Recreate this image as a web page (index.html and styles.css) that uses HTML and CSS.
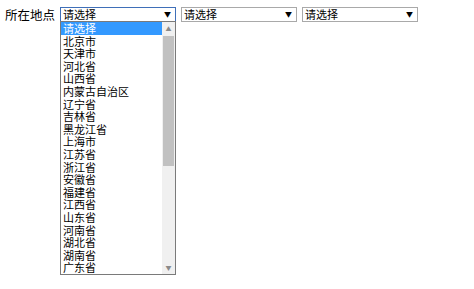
FILE: index.html
```html
<!DOCTYPE html>
<html lang="zh-CN">
<head>
    <meta charset="UTF-8">
    <title>所在地点</title>
    <link rel="stylesheet" href="styles.css">
</head>
<body>
    <div class="location">
        <span class="label">所在地点</span>
        <div class="select-wrap">
            <div class="select open">请选择<span class="arrow">&#9660;</span></div>
            <div class="dropdown">
                <div class="options">
                    <div class="option selected">请选择</div>
                    <div class="option">北京市</div>
                    <div class="option">天津市</div>
                    <div class="option">河北省</div>
                    <div class="option">山西省</div>
                    <div class="option">内蒙古自治区</div>
                    <div class="option">辽宁省</div>
                    <div class="option">吉林省</div>
                    <div class="option">黑龙江省</div>
                    <div class="option">上海市</div>
                    <div class="option">江苏省</div>
                    <div class="option">浙江省</div>
                    <div class="option">安徽省</div>
                    <div class="option">福建省</div>
                    <div class="option">江西省</div>
                    <div class="option">山东省</div>
                    <div class="option">河南省</div>
                    <div class="option">湖北省</div>
                    <div class="option">湖南省</div>
                    <div class="option">广东省</div>
                </div>
                <div class="scrollbar">
                    <span class="scroll-up">&#9650;</span>
                    <div class="track"><div class="thumb"></div></div>
                    <span class="scroll-down">&#9660;</span>
                </div>
            </div>
        </div>
        <div class="select">请选择<span class="arrow">&#9660;</span></div>
        <div class="select">请选择<span class="arrow">&#9660;</span></div>
    </div>
</body>
</html>
```

FILE: styles.css
```css
html, body {
    height: 100%;
}

body {
    margin: 0;
    padding: 7px 5px;
    box-sizing: border-box;
    background: #fff;
    color: #000;
    font-family: "Noto Sans CJK SC", "Liberation Sans", sans-serif;
}

.location {
    display: flex;
    align-items: flex-start;
    gap: 5px;
}

.label {
    font-size: 12.5px;
    line-height: 15px;
}

.select-wrap {
    position: relative;
}

.select {
    width: 110px;
    height: 13px;
    border: 1px solid #a9a9a9;
    padding: 0 2px;
    font-size: 11px;
    line-height: 13px;
    display: flex;
    justify-content: space-between;
    align-items: center;
    background: #fff;
}

.select.open {
    border-color: #3f6fb8;
}

.arrow {
    font-size: 7px;
    margin-right: 2px;
}

.dropdown {
    position: absolute;
    top: 14px;
    left: 0;
    width: 114px;
    height: 252px;
    border: 1px solid #7a7a7a;
    background: #fff;
    display: flex;
    overflow: hidden;
}

.options {
    flex: 1;
}

.option {
    height: 12.6px;
    line-height: 12.6px;
    font-size: 11px;
    padding-left: 2px;
    white-space: nowrap;
}

.option.selected {
    background: #3399ff;
    color: #fff;
}

.scrollbar {
    width: 13px;
    background: #f0f0f0;
    display: flex;
    flex-direction: column;
    align-items: center;
}

.scroll-up, .scroll-down {
    height: 13px;
    line-height: 13px;
    font-size: 6px;
    color: #8a8a8a;
}

.track {
    flex: 1;
    width: 100%;
}

.thumb {
    margin: 1px 1px 0;
    height: 130px;
    background: #c1c1c1;
}
```
